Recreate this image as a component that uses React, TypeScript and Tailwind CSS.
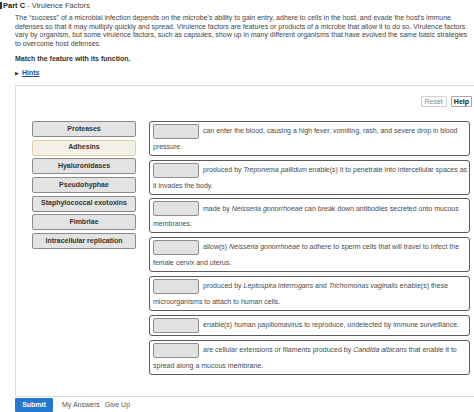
import React from "react";

type Target = { first: React.ReactNode; second?: React.ReactNode };

const features = [
  "Proteases",
  "Adhesins",
  "Hyaluronidases",
  "Pseudohyphae",
  "Staphylococcal exotoxins",
  "Fimbriae",
  "Intracellular replication",
];

const targets: Target[] = [
  {
    first: "can enter the blood, causing a high fever, vomiting, rash, and severe drop in blood",
    second: "pressure.",
  },
  {
    first: (
      <>
        produced by <i>Treponema pallidum</i> enable(s) it to penetrate into intercellular spaces as
      </>
    ),
    second: "it invades the body.",
  },
  {
    first: (
      <>
        made by <i>Neisseria gonorrhoeae</i> can break down antibodies secreted onto mucous
      </>
    ),
    second: "membranes.",
  },
  {
    first: (
      <>
        allow(s) <i>Neisseria gonorrhoeae</i> to adhere to sperm cells that will travel to infect the
      </>
    ),
    second: "female cervix and uterus.",
  },
  {
    first: (
      <>
        produced by <i>Leptospira interrogans</i> and <i>Trichomonas vaginalis</i> enable(s) these
      </>
    ),
    second: "microorganisms to attach to human cells.",
  },
  {
    first: "enable(s) human papillomavirus to reproduce, undetected by immune surveillance.",
  },
  {
    first: (
      <>
        are cellular extensions or filaments produced by <i>Candida albicans</i> that enable it to
      </>
    ),
    second: "spread along a mucous membrane.",
  },
];

function FeatureChip({ label, active }: { label: string; active?: boolean }) {
  return (
    <div
      className={
        "h-[16px] rounded-[2px] border flex items-center justify-center font-bold text-[7px] text-[#333] " +
        (active ? "bg-[#f3f0e8] border-[#e2cf9f]" : "bg-[#e3e3e3] border-[#8a8a8a]")
      }
    >
      {label}
    </div>
  );
}

function TargetBox({ target }: { target: Target }) {
  return (
    <div className="border border-[#5a5a5a] rounded-[3px] px-[3px] pt-[2px] pb-[1px] text-[7px] text-[#4a4a4a]">
      <div className="flex items-center h-[15px] mb-[1px]">
        <div className="w-[46px] h-[15px] shrink-0 bg-[#e2e2e2] border border-[#8e8e8e] rounded-[2px]" />
        <span className="ml-[4px] whitespace-nowrap">{target.first}</span>
      </div>
      {target.second && <div className="h-[14px] leading-[14px] whitespace-nowrap">{target.second}</div>}
    </div>
  );
}

export default function App() {
  return (
    <div className="w-[474px] h-[412px] overflow-hidden bg-white font-['Liberation_Sans',Arial,sans-serif]">
      <div className="flex items-center h-[10px] pt-[1px]">
        <span className="w-[2px] h-[7px] bg-[#333]" />
        <span className="ml-[1px] text-[7.5px] text-[#444] leading-none">
          <b className="text-[#222]">Part C</b> - Virulence Factors
        </span>
      </div>

      <div className="ml-[15px] mt-[4px] text-[7px] leading-[8.7px] text-[#444] whitespace-nowrap">
        The “success” of a microbial infection depends on the microbe's ability to gain entry, adhere to cells in the host, and evade the host's immune
        <br />
        defenses so that it may multiply quickly and spread. Virulence factors are features or products of a microbe that allow it to do so. Virulence factors
        <br />
        vary by organism, but some virulence factors, such as capsules, show up in many different organisms that have evolved the same basic strategies
        <br />
        to overcome host defenses.
      </div>

      <div className="ml-[15px] mt-[6px] text-[7px] leading-[8px] font-bold text-[#333]">
        Match the feature with its function.
      </div>

      <div className="ml-[15px] mt-[6px] flex items-center text-[7px] leading-[8px]">
        <span className="text-[5px] text-[#333] mr-[3px]">▶</span>
        <a href="#" className="font-bold text-[#1e4f9a] underline">
          Hints
        </a>
      </div>

      <div className="ml-[15px] mt-[8px] h-[312px] border-y border-l border-[#dcdcdc] pl-[16px] pr-[4px] pt-[10px]">
        <div className="flex justify-end gap-[4px] -mr-[2px]">
          <button className="h-[11px] px-[3px] border border-[#cfcfcf] rounded-[1px] text-[7px] text-[#888] bg-white">
            Reset
          </button>
          <button className="h-[11px] px-[2px] border border-[#a9a9a9] rounded-[1px] text-[7px] font-bold text-[#222] bg-white">
            Help
          </button>
        </div>

        <div className="flex gap-[13px] mt-[14px]">
          <div className="w-[104px] flex flex-col gap-[2.7px]">
            {features.map((f) => (
              <FeatureChip key={f} label={f} active={f === "Adhesins"} />
            ))}
          </div>
          <div className="w-[321px] flex flex-col gap-[3.8px]">
            {targets.map((t, i) => (
              <TargetBox key={i} target={t} />
            ))}
          </div>
        </div>
      </div>

      <div className="ml-[15px] mt-[1px] flex items-center gap-[9px] text-[7px]">
        <button className="w-[38px] h-[14px] bg-[#2578cf] text-white font-bold rounded-[1px]">Submit</button>
        <span className="text-[#555]">My Answers</span>
        <span className="-ml-[4px] text-[#555]">Give Up</span>
      </div>
    </div>
  );
}
